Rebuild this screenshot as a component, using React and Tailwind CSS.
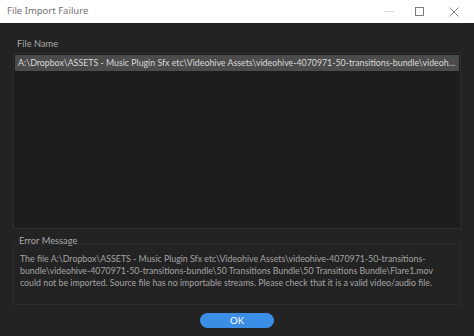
import React from "react";

const filePath =
  "A:\\Dropbox\\ASSETS - Music Plugin Sfx etc\\Videohive Assets\\videohive-4070971-50-transitions-bundle\\videohive-4070971-50-transitions-bundle\\50 Transitions Bundle\\50 Transitions Bundle\\Flare1.mov";

const errorLines = [
  "The file A:\\Dropbox\\ASSETS - Music Plugin Sfx etc\\Videohive Assets\\videohive-4070971-50-transitions-",
  "bundle\\videohive-4070971-50-transitions-bundle\\50 Transitions Bundle\\50 Transitions Bundle\\Flare1.mov",
  "could not be imported. Source file has no importable streams. Please check that it is a valid video/audio file.",
];

const TitleBar = () => (
  <div className="flex items-center h-[23px] bg-white">
    <span className="pl-[7px] text-[9.5px] text-[#707070] font-['Noto_Sans',sans-serif]">File Import Failure</span>
    <div className="ml-auto flex items-center h-full">
      <div className="w-[30px] h-full flex items-center justify-center">
        <div className="w-[10px] h-px bg-[#d8d8d8]" />
      </div>
      <div className="w-[30px] h-full flex items-center justify-center">
        <div className="w-[9px] h-[9px] border border-[#7a7a7a]" />
      </div>
      <div className="w-[40px] h-full flex items-center justify-center">
        <svg width="10" height="10" viewBox="0 0 10 10">
          <path d="M0.5 0.5 L9.5 9.5 M9.5 0.5 L0.5 9.5" stroke="#8a8a8a" strokeWidth="1" />
        </svg>
      </div>
    </div>
  </div>
);

export default function App() {
  return (
    <div className="w-[474px] h-[336px] flex flex-col bg-[#232323] font-['Lato',sans-serif] overflow-hidden">
      <TitleBar />
      <div className="flex-1 flex flex-col px-[13px] pt-[14px]">
        <div className="pl-[4px] text-[9.3px] leading-[14px] text-[#a8a8a8]">File Name</div>
        <div className="mt-[2px] h-[176px] bg-[#1d1d1d] border border-[#2e2e2e] p-px">
          <div className="h-[16px] flex items-center pl-[3px] pr-[2px] bg-[#4b4b4b] text-[8.8px] text-[#d8d8d8] overflow-hidden">
            <span className="truncate min-w-0">{filePath}</span>
          </div>
        </div>
        <div className="mt-[6px] pl-[6px] text-[9.3px] leading-[12px] text-[#a8a8a8]">Error Message</div>
        <div className="-mt-[3px] h-[61px] border border-[#2c2c2c] px-[6px] pt-[8px] text-[8.8px] leading-[12px] text-[#a3a3a3]">
          {errorLines.map((line) => (
            <div key={line} className="whitespace-nowrap">
              {line}
            </div>
          ))}
        </div>
        <div className="flex justify-center mt-[8px]">
          <button className="w-[74px] h-[15px] rounded-full bg-[#3a8ee6] text-[9.5px] leading-[15px] text-white">OK</button>
        </div>
      </div>
    </div>
  );
}
